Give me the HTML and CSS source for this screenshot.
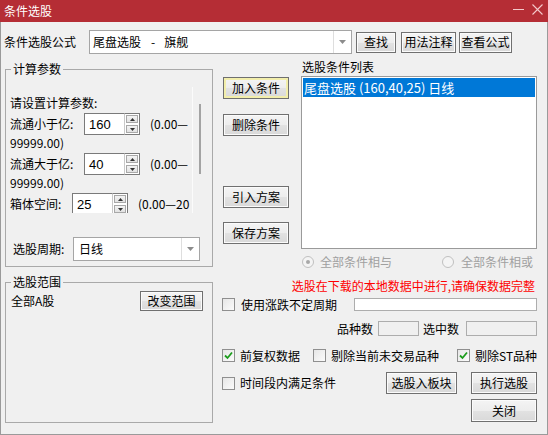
FILE: index.html
```html
<!DOCTYPE html>
<html>
<head>
    <meta charset="utf-8">
    <title>条件选股</title>
    <link rel="stylesheet" href="styles.css">
</head>
<body>
    <div class="window">
        <div class="titlebar">
            <span class="title">条件选股</span>
            <svg class="tb-min" width="11" height="22" viewBox="0 0 11 22"><line x1="0" y1="9.5" x2="11" y2="9.5" stroke="#f3c9cb" stroke-width="1"/></svg>
            <svg class="tb-close" width="11" height="22" viewBox="0 0 11 22"><path d="M0.5 4.5 L10.5 14.5 M10.5 4.5 L0.5 14.5" stroke="#f3c9cb" stroke-width="1.1" fill="none"/></svg>
        </div>

        <div class="toprow">
            <span class="lbl-formula">条件选股公式</span>
            <div class="combo combo-formula">
                <span class="combo-text">尾盘选股<span class="dash">-</span>旗舰</span>
                <span class="combo-btn"><svg width="7" height="4" viewBox="0 0 7 4"><path d="M0 0 H7 L3.5 4 Z" fill="#8c8c8c"/></svg></span>
            </div>
            <button class="btn btn-find">查找</button>
            <button class="btn btn-note">用法注释</button>
            <button class="btn btn-view">查看公式</button>
        </div>

        <div class="main">
            <div class="leftcol">
                <fieldset class="group g-params">
                    <legend>计算参数</legend>
                    <div class="params">
                        <div class="viewport">
                            <div class="p-line">请设置计算参数:</div>
                            <div class="p-row">
                                <span class="p-lbl w74">流通小于亿:</span>
                                <span class="spin"><span class="spin-val">160</span><span class="spin-btns"><span class="sb"><svg width="5" height="3" viewBox="0 0 5 3"><path d="M0 3 H5 L2.5 0 Z" fill="#333"/></svg></span><span class="sb"><svg width="5" height="3" viewBox="0 0 5 3"><path d="M0 0 H5 L2.5 3 Z" fill="#333"/></svg></span></span></span>
                                <span class="p-range">(0.00—</span>
                            </div>
                            <div class="p-line">99999.00)</div>
                            <div class="p-row">
                                <span class="p-lbl w74">流通大于亿:</span>
                                <span class="spin"><span class="spin-val">40</span><span class="spin-btns"><span class="sb"><svg width="5" height="3" viewBox="0 0 5 3"><path d="M0 3 H5 L2.5 0 Z" fill="#333"/></svg></span><span class="sb"><svg width="5" height="3" viewBox="0 0 5 3"><path d="M0 0 H5 L2.5 3 Z" fill="#333"/></svg></span></span></span>
                                <span class="p-range">(0.00—</span>
                            </div>
                            <div class="p-line">99999.00)</div>
                            <div class="p-row">
                                <span class="p-lbl w62">箱体空间:</span>
                                <span class="spin"><span class="spin-val">25</span><span class="spin-btns"><span class="sb"><svg width="5" height="3" viewBox="0 0 5 3"><path d="M0 3 H5 L2.5 0 Z" fill="#333"/></svg></span><span class="sb"><svg width="5" height="3" viewBox="0 0 5 3"><path d="M0 0 H5 L2.5 3 Z" fill="#333"/></svg></span></span></span>
                                <span class="p-range">(0.00—20</span>
                            </div>
                        </div>
                        <div class="vscroll"><div class="thumb"></div></div>
                    </div>
                    <div class="period-row">
                        <span class="period-lbl">选股周期:</span>
                        <div class="combo combo-period">
                            <span class="combo-text">日线</span>
                            <span class="combo-btn"><svg width="7" height="4" viewBox="0 0 7 4"><path d="M0 0 H7 L3.5 4 Z" fill="#8c8c8c"/></svg></span>
                        </div>
                    </div>
                </fieldset>

                <fieldset class="group g-range">
                    <legend>选股范围</legend>
                    <div class="range-body">
                        <div class="range-row">
                            <span>全部A股</span>
                            <button class="btn btn-range">改变范围</button>
                        </div>
                    </div>
                </fieldset>
            </div>

            <div class="rightcol">
                <div class="upper">
                    <div class="btncol">
                        <button class="btn btn-side btn-default">加入条件</button>
                        <button class="btn btn-side btn-del">删除条件</button>
                        <button class="btn btn-side btn-import">引入方案</button>
                        <button class="btn btn-side btn-save">保存方案</button>
                    </div>
                    <div class="listcol">
                        <div class="list-label">选股条件列表</div>
                        <div class="listbox">
                            <div class="list-item selected">尾盘选股 (160,40,25) 日线</div>
                        </div>
                        <div class="radios">
                            <span class="radio checked"></span><span class="radio-text">全部条件相与</span>
                            <span class="radio radio-or"></span><span class="radio-text">全部条件相或</span>
                        </div>
                    </div>
                </div>

                <div class="notice">选股在下载的本地数据中进行,请确保数据完整</div>

                <div class="row row-period">
                    <span class="cb"></span><span class="cb-text">使用涨跌不定周期</span>
                    <span class="field field-period"></span>
                </div>

                <div class="row row-counts">
                    <span>品种数</span><span class="field field-count"></span>
                    <span class="lbl-sel">选中数</span><span class="field field-sel"></span>
                </div>

                <div class="row row-checks">
                    <span class="chk-item w91"><span class="cb checked"><svg width="11" height="11" viewBox="0 0 11 11"><path d="M2 5.5 L4.5 8 L9 2.5" stroke="#1c9c1c" stroke-width="1.8" fill="none"/></svg></span><span class="cb-text">前复权数据</span></span>
                    <span class="chk-item w144"><span class="cb"></span><span class="cb-text">剔除当前未交易品种</span></span>
                    <span class="chk-item"><span class="cb checked"><svg width="11" height="11" viewBox="0 0 11 11"><path d="M2 5.5 L4.5 8 L9 2.5" stroke="#1c9c1c" stroke-width="1.8" fill="none"/></svg></span><span class="cb-text">剔除ST品种</span></span>
                </div>

                <div class="row row-actions">
                    <span class="cb"></span><span class="cb-text">时间段内满足条件</span>
                    <button class="btn btn-block">选股入板块</button>
                    <button class="btn btn-run">执行选股</button>
                </div>

                <div class="row row-close">
                    <button class="btn btn-close">关闭</button>
                </div>
            </div>
        </div>
    </div>
</body>
</html>
```

FILE: styles.css
```css
body { margin: 0; background: #f0f0f0; font: 12px/14px "Noto Sans CJK SC", "Liberation Sans", sans-serif; color: #000; }
.window {
    width: 548px;
    height: 435px;
    box-sizing: border-box;
    background: #f0f0f0;
    border: 1px solid #9a9a9a;
    border-top: none;
}

/* title bar */
.titlebar {
    display: flex;
    align-items: center;
    height: 22px;
    margin: 0 -1px;
    padding: 0 5px 0 4px;
    background: #b52d35;
}
.title { color: #fff; font-size: 12px; line-height: 22px; }
.tb-min { margin-left: auto; }
.tb-close { margin-left: 8px; }

/* buttons */
.btn {
    box-sizing: border-box;
    height: 21px;
    padding: 0;
    border: 1px solid #707070;
    border-radius: 0;
    background: linear-gradient(#f4f4f4 0%, #ededed 50%, #e2e2e2 51%, #d9d9d9 100%);
    box-shadow: inset 0 0 0 1px #fbfbfb;
    font: 12px/14px "Noto Sans CJK SC", "Liberation Sans", sans-serif;
    color: #000;
    flex: none;
}
.btn-default { box-shadow: inset 0 0 0 2px #f2eeab; border-color: #6f6f6f; }

/* combo */
.combo {
    display: flex;
    box-sizing: border-box;
    height: 24px;
    background: #fff;
    border: 1px solid #a5a5a5;
    flex: none;
}
.combo-text { flex: 1; line-height: 22px; padding-left: 3px; }
.dash { margin: 0 9px 0 10px; }
.combo-btn {
    width: 17px;
    border-left: 1px solid #dedede;
    display: flex;
    align-items: center;
    justify-content: center;
}

/* top row */
.toprow {
    display: flex;
    align-items: center;
    height: 24px;
    margin-top: 8px;
    padding-left: 3px;
}
.lbl-formula { width: 85px; flex: none; }
.combo-formula { width: 263px; }
.btn-find { width: 40px; margin-left: 4px; }
.btn-note { width: 55px; margin-left: 5px; }
.btn-view { width: 53px; margin-left: 3px; }

.main { display: flex; padding-left: 4px; }
.leftcol { width: 208px; flex: none; }

/* group boxes */
.group {
    box-sizing: border-box;
    width: 208px;
    min-width: 0;
    margin: 8px 0 0;
    padding: 0;
    border: 1px solid #a9a9a9;
}
.group legend { margin-left: 5px; padding: 0 2px; line-height: 14px; }
.g-params { padding-bottom: 5px; }

.params { display: flex; margin-top: 11px; height: 126px; }
.viewport {
    box-sizing: border-box;
    width: 187px;
    height: 126px;
    padding: 8px 0 0 4px;
    border-right: 1px solid #fbfbfb;
    overflow: hidden;
    white-space: nowrap;
}
.p-line { height: 16px; line-height: 16px; }
.p-row { display: flex; align-items: center; height: 22px; margin-top: 2px; }
.p-lbl { flex: none; }
.w74 { width: 74px; }
.w62 { width: 62px; }
.spin { display: flex; height: 22px; flex: none; }
.spin-val {
    box-sizing: border-box;
    width: 40px;
    padding: 4px 0 0 4px;
    background: #fff;
    border: 1px solid #7a7a7a;
    border-right: none;
    font: 13px/14px "Liberation Sans", sans-serif;
}
.spin-btns {
    box-sizing: border-box;
    width: 16px;
    display: flex;
    flex-direction: column;
    border: 1px solid #7a7a7a;
    border-left: 1px solid #c8c8c8;
    background: #fff;
}
.sb {
    flex: 1;
    display: flex;
    align-items: center;
    justify-content: center;
    margin: 1px;
    border: 1px solid #a8a8a8;
    background: linear-gradient(#f4f4f4, #e2e2e2);
}
.p-range { margin-left: 10px; flex: none; }
.vscroll { width: 2px; margin-left: 6px; }
.thumb { height: 70px; margin-top: 17px; background: #a3a3a3; }

.period-row { display: flex; align-items: center; height: 24px; margin-top: 24px; padding-left: 7px; }
.period-lbl { width: 60px; flex: none; }
.combo-period { width: 127px; }
.combo-period .combo-text { padding-left: 5px; }

.range-body { box-sizing: border-box; height: 133px; padding: 2px 9px 0 5px; }
.range-row { display: flex; align-items: center; justify-content: space-between; height: 20px; }
.btn-range { width: 63px; height: 20px; }

/* right side */
.rightcol { width: 315px; flex: none; margin-left: 9px; }
.upper { display: flex; }
.btncol { display: flex; flex-direction: column; width: 66px; margin-left: 1px; padding-top: 23px; }
.btn-side { width: 66px; height: 22px; }
.btn-del { margin-top: 15px; }
.btn-import { margin-top: 50px; }
.btn-save { margin-top: 14px; }
.listcol { width: 236px; margin-left: 12px; }
.list-label { padding: 6px 0 0 1px; line-height: 14px; }
.listbox {
    box-sizing: border-box;
    height: 173px;
    margin-top: 2px;
    padding: 1px;
    background: #fff;
    border: 1px solid #9a9a9a;
}
.list-item { height: 19px; line-height: 19px; padding-left: 1px; font-size: 13px; white-space: nowrap; }
.list-item.selected { background: #0078d7; color: #fff; }

.radios { display: flex; align-items: center; height: 14px; margin-top: 6px; padding-left: 1px; color: #a0a0a0; }
.radio {
    box-sizing: border-box;
    width: 12px;
    height: 12px;
    border: 1px solid #c0c0c0;
    border-radius: 50%;
    background: #f4f4f4;
    display: flex;
    align-items: center;
    justify-content: center;
    flex: none;
}
.radio.checked::after { content: ""; width: 4px; height: 4px; border-radius: 50%; background: #a8a8a8; }
.radio-text { margin-left: 6px; }
.radio-or { margin-left: 50px; }
.radio-or + .radio-text { margin-left: 7px; }

.notice { margin-top: 10px; padding-right: 2px; line-height: 14px; text-align: right; color: #ff0000; white-space: nowrap; }

.row { display: flex; align-items: center; white-space: nowrap; }
.cb {
    box-sizing: border-box;
    width: 13px;
    height: 13px;
    border: 1px solid #8f8f8f;
    background: linear-gradient(135deg, #e6e6e6, #fbfbfb);
    display: flex;
    align-items: center;
    justify-content: center;
    flex: none;
}
.cb-text { margin-left: 5px; }
.row-period { height: 13px; margin-top: 5px; }
.row-period .cb-text { margin-left: 6px; }
.field { box-sizing: border-box; height: 13px; border: 1px solid #adadad; flex: none; }
.field-period { width: 183px; margin-left: auto; background: #fff; }
.row-counts { height: 15px; margin-top: 10px; justify-content: flex-end; }
.field-count { width: 41px; height: 15px; margin-left: 5px; }
.lbl-sel { margin-left: 4px; }
.field-sel { width: 71px; height: 15px; margin-left: 7px; }
.row-checks { height: 13px; margin-top: 13px; }
.chk-item { display: flex; align-items: center; flex: none; }
.w91 { width: 91px; }
.w144 { width: 144px; }
.row-actions { height: 22px; margin-top: 10px; }
.btn-block { width: 71px; height: 22px; margin-left: auto; }
.btn-run { width: 66px; height: 22px; margin-left: 14px; }
.row-close { height: 23px; margin-top: 5px; justify-content: flex-end; }
.btn-close { width: 66px; height: 23px; }
```
